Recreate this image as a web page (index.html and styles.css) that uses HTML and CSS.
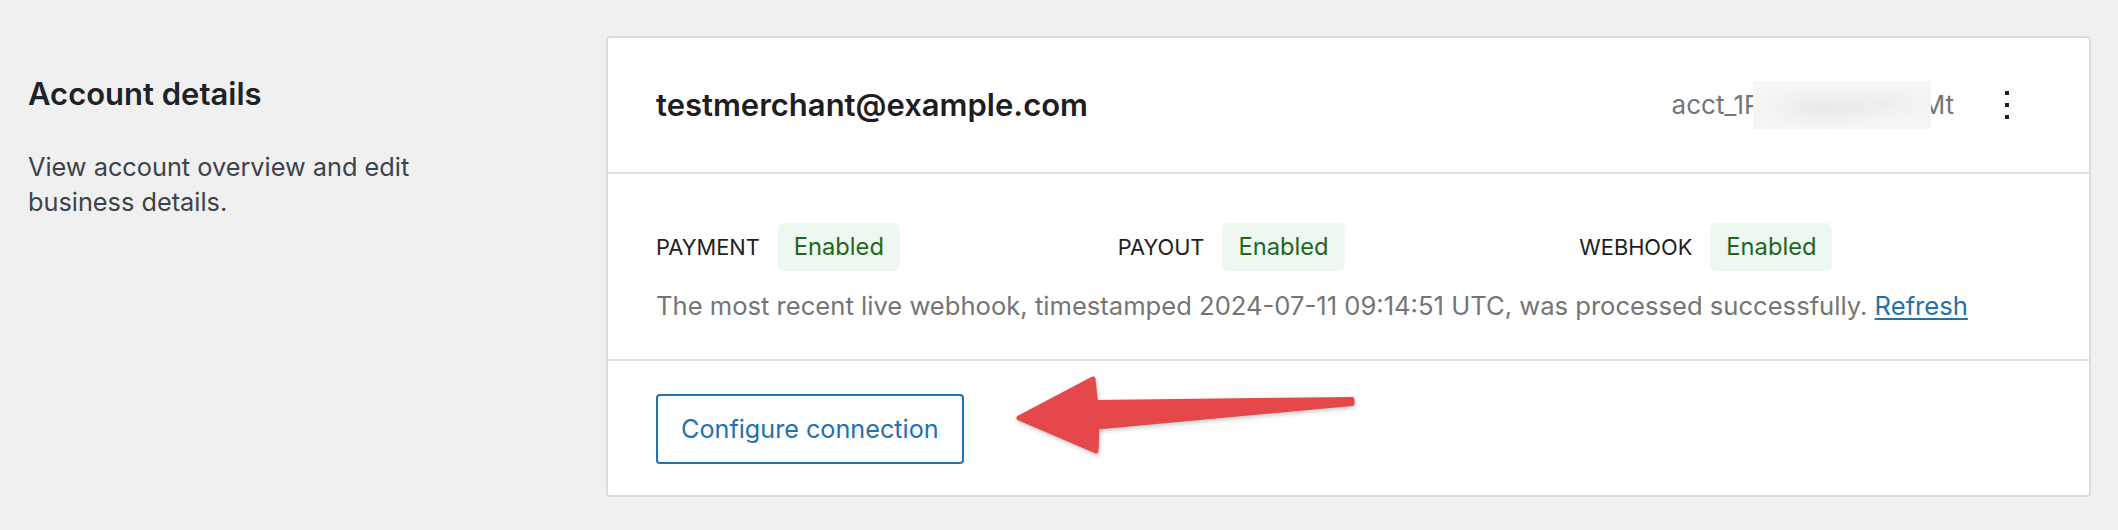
FILE: index.html
```html
<!DOCTYPE html>
<html>
<head>
<meta charset="utf-8">
<link rel="stylesheet" href="styles.css">
</head>
<body>
<div class="page">
  <div class="intro">
    <h2 class="intro-title">Account details</h2>
    <p class="intro-text">View account overview and edit business details.</p>
  </div>
  <div class="card">
    <div class="card-header">
      <div class="email">testmerchant@example.com</div>
      <div class="header-right">
        <span class="acct">acct_1P<span class="redact"></span>Mt</span>
        <button class="kebab" aria-label="More">
          <svg width="4" height="28" viewBox="0 0 4 28"><rect x="0" y="0" width="4" height="4" fill="#1e1e1e"/><rect x="0" y="12" width="4" height="4" fill="#1e1e1e"/><rect x="0" y="24" width="4" height="4" fill="#1e1e1e"/></svg>
        </button>
      </div>
    </div>
    <div class="card-body">
      <div class="statuses">
        <div class="status"><span class="status-label">PAYMENT</span><span class="chip">Enabled</span></div>
        <div class="status"><span class="status-label">PAYOUT</span><span class="chip">Enabled</span></div>
        <div class="status"><span class="status-label">WEBHOOK</span><span class="chip">Enabled</span></div>
      </div>
      <p class="webhook-msg">The most recent live webhook, timestamped 2024-07-11 09:14:51 UTC, was processed successfully. <a class="link" href="#">Refresh</a></p>
    </div>
    <div class="card-footer">
      <button class="btn-secondary">Configure connection</button>
    </div>
  </div>
</div>
<svg class="annotation" width="2118" height="530" viewBox="0 0 2118 530">
  <path class="arrow" d="M1019 418 L1093 379 L1095.5 402.5 L1352 399.5 L1352 403.5 L1097 427 L1096 451 Z"/>
</svg>
</body>
</html>
```

FILE: styles.css
```css
* { box-sizing: border-box; }
body {
  margin: 0;
  background: #f0f0f0;
  font-family: Inter, "Noto Sans", sans-serif;
  color: #1e1e1e;
}
.page {
  display: grid;
  grid-template-columns: 578px 1fr;
  padding: 36px 27px 0 28px;
}
.intro { padding-top: 38px; }
.intro-title {
  margin: 0;
  font-size: 31px;
  line-height: 40px;
  font-weight: 600;
  color: #1d2327;
}
.intro-text {
  margin: 35px 0 0;
  max-width: 430px;
  font-size: 25.3px;
  line-height: 35px;
  color: #3c434a;
}
.card {
  background: #fff;
  border: 2px solid #dcdcdc;
  border-radius: 4px;
}
.card-header {
  display: flex;
  align-items: center;
  justify-content: space-between;
  padding: 43px 48px;
  border-bottom: 2px solid #e2e2e2;
}
.email {
  font-size: 31px;
  line-height: 40px;
  font-weight: 600;
  color: #1e1e1e;
}
.header-right {
  display: flex;
  align-items: center;
  gap: 19px;
}
.acct {
  font-size: 26px;
  line-height: 48px;
  color: #757575;
  display: flex;
  align-items: center;
  white-space: nowrap;
}
.redact {
  display: inline-block;
  width: 178px;
  height: 48px;
  margin: 0 -9px 0 -8px;
  background:
    radial-gradient(ellipse 40% 45% at 40% 55%, rgba(225,225,225,0.6), rgba(240,240,240,0) 100%),
    radial-gradient(ellipse 35% 40% at 75% 45%, rgba(230,230,230,0.5), rgba(240,240,240,0) 100%),
    #f6f6f6;
  position: relative;
}
.kebab {
  width: 68px;
  height: 48px;
  border: 0;
  background: transparent;
  padding: 0;
  display: flex;
  align-items: center;
  justify-content: center;
}
.kebab svg { display: block; }
.card-body {
  padding: 49px 48px 35px;
  border-bottom: 2px solid #e2e2e2;
}
.statuses {
  display: grid;
  grid-template-columns: 1fr 1fr 1fr;
}
.status {
  display: flex;
  align-items: center;
}
.status-label {
  font-size: 21.8px;
  line-height: 48px;
  color: #1e1e1e;
  margin-right: 18px;
}
.chip {
  display: inline-block;
  height: 48px;
  padding: 0 16px;
  font-size: 23.7px;
  line-height: 48px;
  background: #eff8f0;
  color: #1f661f;
  border-radius: 6px;
}
.webhook-msg {
  margin: 17px 0 0;
  font-size: 25.6px;
  line-height: 36px;
  color: #757575;
}
.link {
  color: #2271b1;
  text-decoration: underline;
  text-decoration-thickness: 2px;
  text-underline-offset: 3px;
}
.card-footer {
  padding: 33px 48px 31px;
}
.btn-secondary {
  height: 70px;
  padding: 0 23px;
  border: 2px solid #2271b1;
  border-radius: 4px;
  background: #fff;
  color: #2271b1;
  font-family: Inter, "Noto Sans", sans-serif;
  font-size: 25.2px;
  line-height: 66px;
}
.annotation {
  position: absolute;
  top: 0;
  left: 0;
  pointer-events: none;
  overflow: visible;
}
.arrow {
  fill: #e4484b;
  stroke: #e4484b;
  stroke-width: 5;
  stroke-linejoin: round;
  filter: drop-shadow(1px 2px 2px rgba(0,0,0,0.22));
}
```
